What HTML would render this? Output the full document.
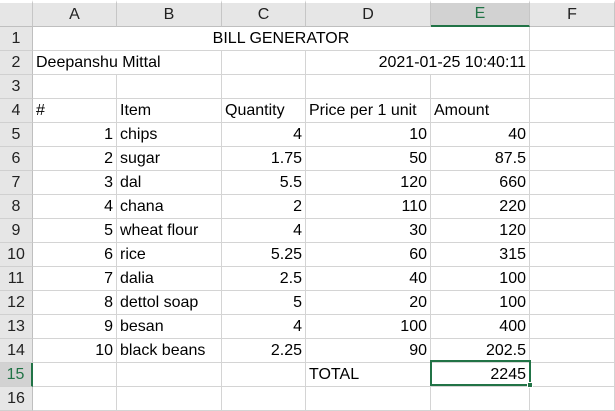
<!DOCTYPE html>
<html><head><meta charset="utf-8"><style>
*{margin:0;padding:0;box-sizing:border-box}
body{width:615px;height:405px;overflow:hidden;background:#fff;font-family:"Liberation Sans",Calibri,sans-serif;font-size:16px;color:#000;position:relative}
table{border-collapse:separate;border-spacing:0;table-layout:fixed;width:615px}
td{height:24px;border-right:1px solid #d4d4d4;border-bottom:1px solid #d4d4d4;padding:0 3px;white-space:nowrap;overflow:hidden;line-height:22px}
.r{text-align:right}.c{text-align:center}
tr.h td{height:25px;background:#e6e6e6;border-right:1px solid #c6c6c6;border-bottom:1px solid #bfbfbf;text-align:center;color:#222;border-top:3px solid #fff}
td.n{background:#e6e6e6;border-right:1px solid #bfbfbf;border-bottom:1px solid #d0d0d0;text-align:center;color:#222;padding:0}
tr.h td.sel{background:#d2d2d2;border-bottom:2px solid #217346;color:#217346}
td.n.sel{background:#d2d2d2;border-right:2px solid #217346;color:#217346}
#cur{position:absolute;left:430px;top:360px;width:101px;height:26px;border:2px solid #217346}
#hd{position:absolute;left:527px;top:382px;width:6px;height:6px;background:#217346;border:1px solid #fff}
</style></head><body>
<table>
<colgroup><col style="width:33px"><col style="width:84px"><col style="width:105px"><col style="width:84px"><col style="width:125px"><col style="width:99px"><col style="width:85px"></colgroup>
<tr class="h"><td style="background:#e6e6e6"></td><td>A</td><td>B</td><td>C</td><td>D</td><td class="sel">E</td><td>F</td></tr>
<tr><td class="n">1</td><td colspan="5" class="c">BILL GENERATOR</td><td></td></tr>
<tr><td class="n">2</td><td colspan="2">Deepanshu Mittal</td><td></td><td colspan="2" class="r">2021-01-25 10:40:11</td><td></td></tr>
<tr><td class="n">3</td><td></td><td></td><td></td><td></td><td></td><td></td></tr>
<tr><td class="n">4</td><td>#</td><td>Item</td><td>Quantity</td><td>Price per 1 unit</td><td>Amount</td><td></td></tr>
<tr><td class="n">5</td><td class="r">1</td><td>chips</td><td class="r">4</td><td class="r">10</td><td class="r">40</td><td></td></tr>
<tr><td class="n">6</td><td class="r">2</td><td>sugar</td><td class="r">1.75</td><td class="r">50</td><td class="r">87.5</td><td></td></tr>
<tr><td class="n">7</td><td class="r">3</td><td>dal</td><td class="r">5.5</td><td class="r">120</td><td class="r">660</td><td></td></tr>
<tr><td class="n">8</td><td class="r">4</td><td>chana</td><td class="r">2</td><td class="r">110</td><td class="r">220</td><td></td></tr>
<tr><td class="n">9</td><td class="r">5</td><td>wheat flour</td><td class="r">4</td><td class="r">30</td><td class="r">120</td><td></td></tr>
<tr><td class="n">10</td><td class="r">6</td><td>rice</td><td class="r">5.25</td><td class="r">60</td><td class="r">315</td><td></td></tr>
<tr><td class="n">11</td><td class="r">7</td><td>dalia</td><td class="r">2.5</td><td class="r">40</td><td class="r">100</td><td></td></tr>
<tr><td class="n">12</td><td class="r">8</td><td>dettol soap</td><td class="r">5</td><td class="r">20</td><td class="r">100</td><td></td></tr>
<tr><td class="n">13</td><td class="r">9</td><td>besan</td><td class="r">4</td><td class="r">100</td><td class="r">400</td><td></td></tr>
<tr><td class="n">14</td><td class="r">10</td><td>black beans</td><td class="r">2.25</td><td class="r">90</td><td class="r">202.5</td><td></td></tr>
<tr><td class="n sel">15</td><td></td><td></td><td></td><td>TOTAL</td><td class="r">2245</td><td></td></tr>
<tr><td class="n">16</td><td></td><td></td><td></td><td></td><td></td><td></td></tr>
</table>
<div id="cur"></div><div id="hd"></div>
</body></html>
